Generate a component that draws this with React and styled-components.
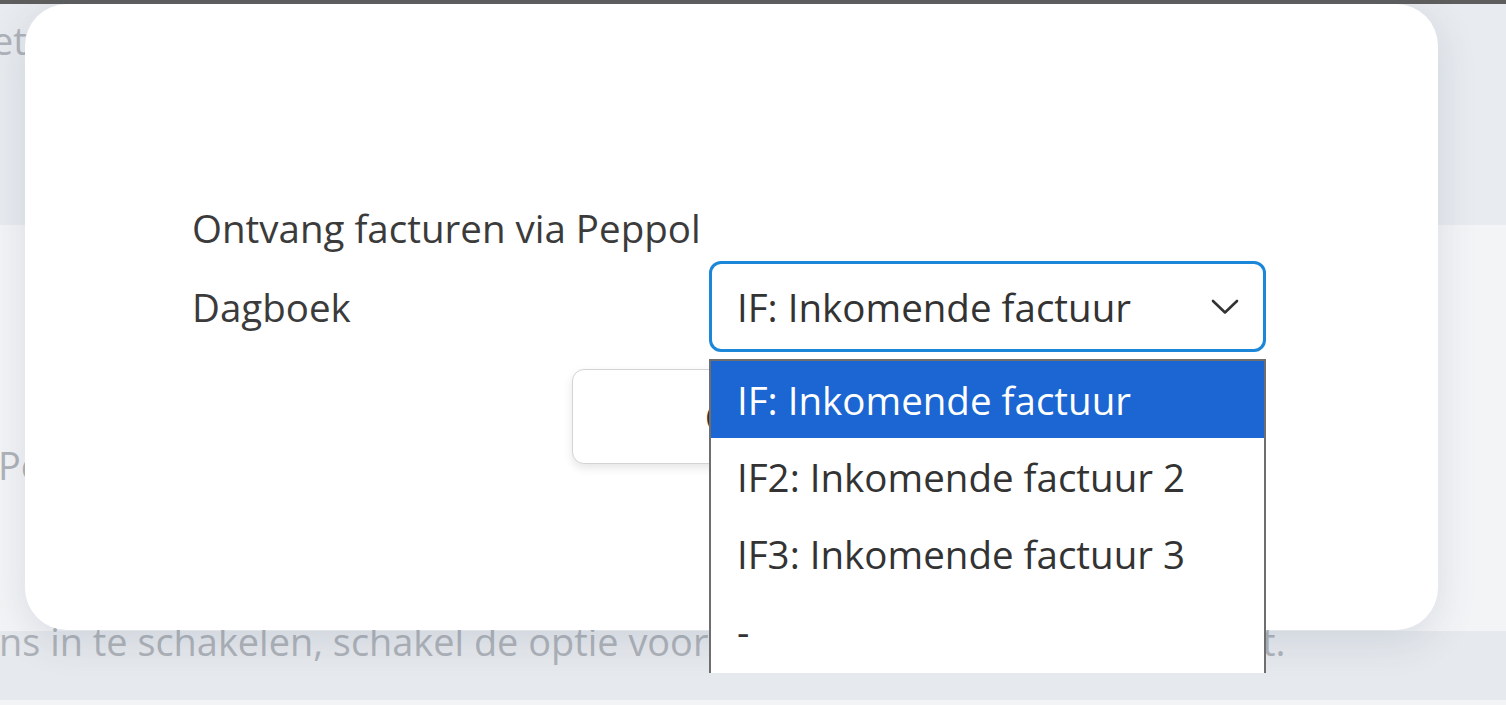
import React from "react";
import styled, { createGlobalStyle } from "styled-components";

const GlobalStyle = createGlobalStyle`
  html, body {
    margin: 0;
    padding: 0;
    background: #f1f2f4;
  }
  body {
    font-family: "Open Sans", "Noto Sans", sans-serif;
  }
`;

const options = [
  "IF: Inkomende factuur",
  "IF2: Inkomende factuur 2",
  "IF3: Inkomende factuur 3",
  "-",
];

const App = () => {
  return (
    <Screen>
      <GlobalStyle />
      <WindowEdge />
      <BackPage>
        <BackHeader>
          <BackText shift={-8}>et</BackText>
        </BackHeader>
        <BackBody>
          <BackText shift={-2} top={214}>
            Pe
          </BackText>
          <BackText shift={-1} top={124}>
            ns in te schakelen, schakel de optie voor Peppol in via jouw
            abonnement.
          </BackText>
        </BackBody>
      </BackPage>

      <Modal>
        <Form>
          <Label>Ontvang facturen via Peppol</Label>
          <span />
          <Label>Dagboek</Label>
          <SelectWrap>
            <Select>
              <SelectValue>{options[0]}</SelectValue>
              <svg width="28" height="16" viewBox="0 0 28 16">
                <polyline
                  points="2,2 14,13.5 26,2"
                  fill="none"
                  stroke="#333"
                  strokeWidth="2.6"
                  strokeLinecap="round"
                  strokeLinejoin="round"
                />
              </svg>
            </Select>
            <OptionList>
              {options.map((o, i) => (
                <Option key={o} active={i === 0}>
                  {o}
                </Option>
              ))}
            </OptionList>
          </SelectWrap>
        </Form>
        <Actions>
          <Button>OK</Button>
        </Actions>
      </Modal>
    </Screen>
  );
};

export default App;

const Screen = styled.div`
  position: relative;
  width: 1506px;
  height: 705px;
  overflow: hidden;
  background: #f1f2f4;
`;

const WindowEdge = styled.div`
  height: 4px;
  background: #5e5e5e;
`;

const BackPage = styled.div`
  display: flex;
  flex-direction: column;
  height: 701px;
`;

const BackHeader = styled.div`
  height: 221px;
  background: #e8ebef;
  padding-top: 10px;
  box-sizing: border-box;
`;

const BackBody = styled.div`
  flex: 1;
  display: flex;
  flex-direction: column;
  background: linear-gradient(
    #f3f4f6 0,
    #f3f4f6 406px,
    #e6e9ed 406px,
    #e6e9ed 475px,
    #f3f4f6 475px
  );
`;

const BackText = styled.div`
  margin-left: ${(p) => p.shift}px;
  margin-top: ${(p) => p.top || 0}px;
  font-size: 37.9px;
  line-height: 52px;
  color: #aeb2b8;
  white-space: nowrap;
`;

const Modal = styled.div`
  position: absolute;
  left: 25px;
  top: 4px;
  width: 1413px;
  height: 626px;
  box-sizing: border-box;
  padding: 198px 0 0 167px;
  background: #fff;
  border-radius: 42px;
  box-shadow: 0 10px 40px rgba(60, 80, 110, 0.14);
`;

const Form = styled.div`
  display: grid;
  grid-template-columns: 517px 557px;
  grid-template-rows: 52px 91px;
  row-gap: 7px;
  align-items: center;
`;

const Label = styled.div`
  font-size: 38.5px;
  line-height: 52px;
  color: #3b3b3b;
  white-space: nowrap;
`;

const SelectWrap = styled.div`
  position: relative;
  height: 91px;
`;

const Select = styled.div`
  height: 91px;
  box-sizing: border-box;
  border: 3px solid #1c86d8;
  border-radius: 12px;
  background: #fff;
  display: flex;
  align-items: center;
  justify-content: space-between;
  padding: 0 24px 0 25px;
`;

const SelectValue = styled.span`
  font-size: 38.5px;
  color: #333;
  white-space: nowrap;
`;

const OptionList = styled.div`
  position: absolute;
  top: 98px;
  left: 0;
  width: 557px;
  height: 314px;
  overflow: hidden;
  box-sizing: border-box;
  background: #fff;
  border: 2px solid #6e6e6e;
  border-bottom: 0;
  z-index: 2;
`;

const Option = styled.div`
  height: 77px;
  display: flex;
  align-items: center;
  padding-left: 26px;
  font-size: 38.5px;
  color: ${(p) => (p.active ? "#fff" : "#333")};
  background: ${(p) => (p.active ? "#1b66d2" : "#fff")};
  white-space: nowrap;
`;

const Actions = styled.div`
  display: flex;
  justify-content: center;
  padding-right: 167px;
  margin-top: 17px;
`;

const Button = styled.button`
  width: 320px;
  height: 95px;
  border: 1px solid #d4d4d4;
  border-radius: 12px;
  background: #fff;
  box-shadow: 0 4px 10px rgba(0, 0, 0, 0.1);
  font-family: "Open Sans", sans-serif;
  font-size: 38.5px;
  color: #333;
`;
